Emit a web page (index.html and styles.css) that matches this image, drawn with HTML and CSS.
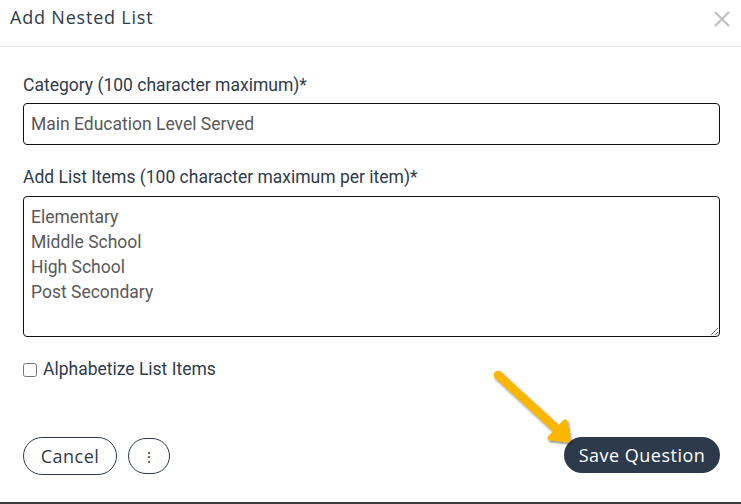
FILE: index.html
```html
<!DOCTYPE html>
<html>
<head>
<meta charset="utf-8">
<link rel="stylesheet" href="styles.css">
</head>
<body>
<div class="modal">
  <div class="header">
    <div class="title">Add Nested List</div>
    <svg class="close" width="18" height="18" viewBox="0 0 18 18"><path d="M2 2L16 16M16 2L2 16" stroke="#c2c2c2" stroke-width="2.4" stroke-linecap="butt"/></svg>
  </div>
  <div class="content">
    <label class="label">Category (100 character maximum)*</label>
    <div class="input">Main Education Level Served</div>
    <label class="label second">Add List Items (100 character maximum per item)*</label>
    <textarea class="textarea">Elementary
Middle School
High School
Post Secondary</textarea>
    <div class="check-row">
      <input type="checkbox" class="check">
      <span>Alphabetize List Items</span>
    </div>
    <div class="footer">
      <div class="left">
        <button class="btn outline">Cancel</button>
        <button class="btn outline dots">&#8942;</button>
      </div>
      <button class="btn primary">Save Question</button>
    </div>
  </div>
  <svg class="arrow" width="120" height="110" viewBox="0 0 120 110">
    <defs>
      <filter id="sh" x="-20%" y="-20%" width="140%" height="140%">
        <feDropShadow dx="1" dy="1.5" stdDeviation="1.2" flood-color="#000" flood-opacity="0.55"/>
      </filter>
    </defs>
    <g filter="url(#sh)" fill="none" stroke="#f9b700" stroke-linecap="round" stroke-linejoin="round">
      <path d="M18 15L80 72" stroke-width="8.5"/>
      <path d="M70 78L88 80L85 62Z" fill="#f9b700" stroke-width="5"/>
    </g>
  </svg>
</div>
</body>
</html>
```

FILE: styles.css
```css
html, body {
  margin: 0;
  padding: 0;
}
body {
  background: #3a3a3a;
  width: 741px;
  height: 504px;
  overflow: hidden;
}
.modal {
  position: relative;
  width: 741px;
  height: 502px;
  background: #fff;
  font-family: Roboto, "Liberation Sans", sans-serif;
}
.header {
  height: 46px;
  border-bottom: 1px solid #e6e6e6;
  display: flex;
  align-items: flex-start;
  justify-content: space-between;
  padding: 0 10px;
}
.title {
  font-family: "Open Sans", Roboto, sans-serif;
  font-size: 18px;
  color: #2f3b4b;
  line-height: 20px;
  margin-top: 7px;
  letter-spacing: 0.8px;
}
.close {
  margin-top: 10px;
}
.content {
  padding: 29px 21px 0 23px;
  display: flex;
  flex-direction: column;
}
.label {
  font-size: 17.5px;
  line-height: 19px;
  color: #2f3b4b;
  margin-bottom: 8px;
}
.label.second {
  margin-top: 23px;
  margin-bottom: 9px;
}
.input {
  height: 40px;
  border: 1px solid #111;
  border-radius: 4px;
  padding: 0 7px;
  display: flex;
  align-items: center;
  font-size: 17.5px;
  color: #595959;
}
.textarea {
  box-sizing: border-box;
  height: 141px;
  border: 1px solid #111;
  border-radius: 4px;
  padding: 8px 7px 6px;
  font-family: Roboto, "Liberation Sans", sans-serif;
  font-size: 17.5px;
  line-height: 25px;
  color: #595959;
  margin: 0;
  resize: both;
  outline: none;
}
.check-row {
  margin-top: 23px;
  display: flex;
  align-items: center;
  font-size: 17.5px;
  line-height: 19px;
  color: #2f3b4b;
}
.check {
  margin: 1px 6px 0 0;
  width: 14px;
  height: 14px;
}
.footer {
  margin-top: 58px;
  display: flex;
  justify-content: space-between;
  align-items: flex-start;
}
.left {
  display: flex;
  align-items: center;
  gap: 11px;
}
.btn {
  font-family: "Open Sans", Roboto, sans-serif;
  font-size: 18px;
  letter-spacing: 0.5px;
  border-radius: 20px;
  cursor: pointer;
  padding: 0;
}
.outline {
  background: #fff;
  border: 1px solid #2f3b4b;
  color: #2f3b4b;
  width: 94px;
  height: 38px;
}
.outline.dots {
  width: 42px;
  height: 36px;
  font-size: 14px;
  border-radius: 18px;
}
.primary {
  background: #2d3a4b;
  color: #fff;
  border: none;
  width: 156px;
  height: 36px;
  border-radius: 18px;
}
.arrow {
  position: absolute;
  left: 480px;
  top: 360px;
}
```
